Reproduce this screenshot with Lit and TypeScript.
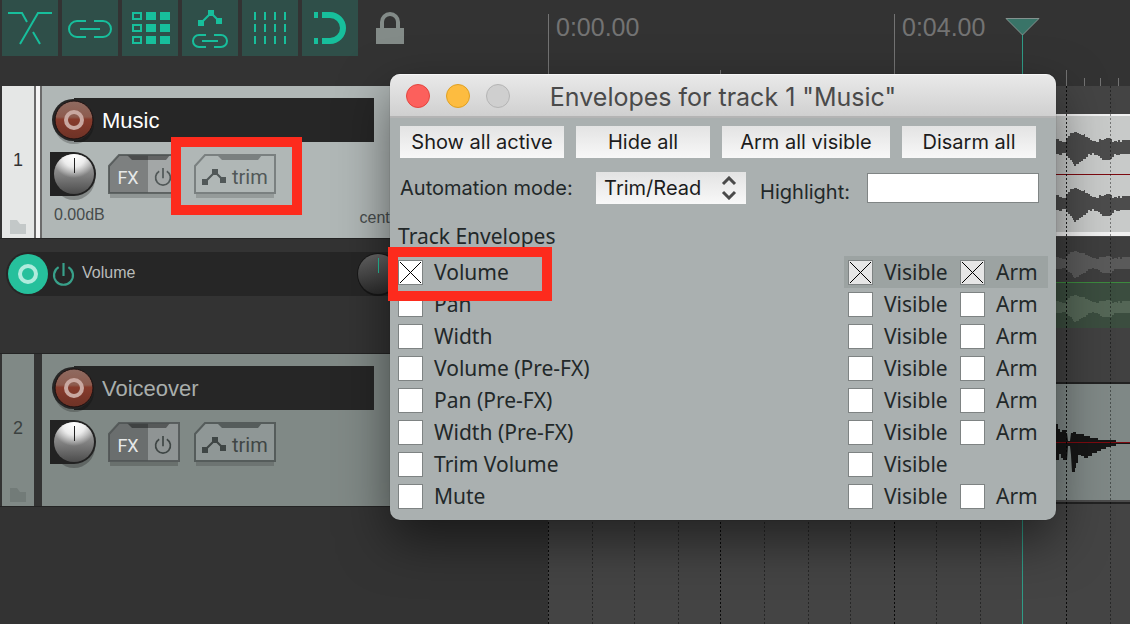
import { LitElement, html, svg, css, nothing } from "lit";
import { customElement, property } from "lit/decorators.js";

interface EnvelopeRow {
  name: string;
  enabled: boolean;
  arm: boolean;
}

const ENVELOPES: EnvelopeRow[] = [
  { name: "Volume", enabled: true, arm: true },
  { name: "Pan", enabled: false, arm: true },
  { name: "Width", enabled: false, arm: true },
  { name: "Volume (Pre-FX)", enabled: false, arm: true },
  { name: "Pan (Pre-FX)", enabled: false, arm: true },
  { name: "Width (Pre-FX)", enabled: false, arm: true },
  { name: "Trim Volume", enabled: false, arm: false },
  { name: "Mute", enabled: false, arm: true },
];

const powerIcon = (size: number) => html`<svg
  width=${size} height=${size} viewBox="0 0 16 16" fill="none" stroke="currentColor" aria-hidden="true">
  <path d="M4.6 2.9A6.6 6.6 0 1 0 11.4 2.9M8 0V9" stroke-width="1.5" />
</svg>`;

const nodesIcon = html`<svg width="24" height="18" viewBox="0 0 24 18" aria-hidden="true">
  <path d="M3 14L13 4L21 12" fill="none" stroke="currentColor" stroke-width="2" />
  <path d="M0 11h6v6H0zM10 1h6v6h-6zM18 9h6v6h-6z" fill="currentColor" />
</svg>`;

@customElement("main-toolbar")
export class MainToolbar extends LitElement {
  static styles = css`
    :host { display: flex; gap: 4px; padding-left: 2px; height: 86px; box-sizing: border-box; }
    .tool {
      width: 56px; height: 56px; padding: 0; border: 0;
      background: #2f4f49; color: #17bf9c;
    }
    .plain { background: none; color: #838b88; }
    svg { display: block; }
  `;

  render() {
    return html`
      <button class="tool" aria-label="Auto-crossfade">
        <svg width="56" height="56" fill="none" stroke="currentColor" stroke-width="2">
          <path d="M6 13H20L25 22M50 13H36L18 44M31 32L38 44" />
        </svg>
      </button>
      <button class="tool" aria-label="Item grouping">
        <svg width="56" height="56" fill="none" stroke="currentColor" stroke-width="2">
          <path d="M24 21H15a8 8 0 0 0 0 16H24M32 21H41a8 8 0 0 1 0 16H32M18 29H38" />
        </svg>
      </button>
      <button class="tool" aria-label="Ripple editing">
        <svg width="56" height="56">
          <path d="M11 13h8v6h-8zM11 25h8v6h-8zM11 37h8v6h-8z" fill="none" stroke="currentColor" stroke-width="2" />
          <path d="M24 12h10v8H24zM38 12h10v8H38zM24 24h10v8H24zM38 24h10v8H38zM24 36h10v8H24zM38 36h10v8H38z" fill="currentColor" />
        </svg>
      </button>
      <button class="tool" aria-label="Move envelope points with items">
        <svg width="56" height="56" fill="none" stroke="currentColor" stroke-width="2">
          <path d="M19 23L29 13L37 21" />
          <path d="M16 20h6v6h-6zM26 10h6v6h-6zM34 18h6v6h-6z" fill="currentColor" stroke="none" />
          <path d="M24 35H17a6 6 0 0 0 0 12H24M32 35H39a6 6 0 0 1 0 12H32M20 41H36" />
        </svg>
      </button>
      <button class="tool" aria-label="Grid lines">
        <svg width="56" height="56" fill="none" stroke="currentColor" stroke-width="2">
          <path d="M13 12V44M23 12V44M33 12V44M43 12V44" stroke-dasharray="8 4" />
        </svg>
      </button>
      <button class="tool" aria-label="Snapping">
        <svg width="56" height="56" fill="none" stroke="currentColor" stroke-width="6">
          <path d="M12 15h4M12 41h4M20 15H28a13 13 0 0 1 0 26H20" />
        </svg>
      </button>
      <button class="tool plain" aria-label="Locking">
        <svg width="56" height="56">
          <path d="M20 30V22a8 8 0 0 1 16 0V30" fill="none" stroke="currentColor" stroke-width="4" />
          <path d="M14 28h28v16H14z" fill="currentColor" />
        </svg>
      </button>
    `;
  }
}

@customElement("track-panel")
export class TrackPanel extends LitElement {
  @property() name = "";
  @property({ type: Number }) index = 1;
  @property({ type: Boolean }) selected = false;
  @property() gain = "";
  @property() pan = "";

  static styles = css`
    :host {
      display: grid; grid-template-columns: 32px 8px 1fr; height: 153px; box-sizing: border-box;
      padding-left: 2px; border-bottom: 1px solid #242424;
      font-family: "Liberation Sans", Arial, sans-serif;
      --panel: #808986; --edge: #555c5b; --ink: #3f4645; --face: #8f9796; --fx: #6a6e6e; --side: #8f9494;
    }
    :host([selected]) { --panel: #b0b7b6; --edge: #7a8080; --ink: #515858; --face: #b0b7b6; --fx: #7d8080; --side: #a3a7a7; }
    .number {
      position: relative; display: flex; align-items: center; justify-content: center;
      background: #808986; color: #3b4140; font-size: 18px; padding-bottom: 4px;
    }
    :host([selected]) .number { background: #e5e7e6; color: #333; }
    .folder { position: absolute; left: 8px; bottom: 4px; color: #727b78; }
    :host([selected]) .folder { color: #c3c8c8; }
    .bar { background: #333; }
    :host([selected]) .bar { background: #f4f4f4; border: solid #6b6b6b; border-width: 0 2px; }
    .body { background: var(--panel); padding: 12px 0 0 8px; min-width: 0; }
    .title { display: flex; align-items: center; height: 44px; }
    .strip {
      flex: none; box-sizing: border-box; width: 300px; height: 44px; margin-left: -22px; padding: 2px 0 0 28px; border: 0;
      background: #262626; color: #a9aeac; font: 22px "Liberation Sans", Arial, sans-serif;
    }
    :host([selected]) .strip { color: #fff; }
    .arm { position: relative; flex: none; width: 46px; height: 48px; padding: 0; border: 0; background: none; }
    .arm svg, .knob svg, .chip svg { display: block; }
    .controls { display: flex; height: 44px; margin-top: 10px; }
    .knob { width: 46px; height: 50px; }
    .chip {
      position: relative; display: flex; align-items: center; height: 44px; margin: 2px 0 0 12px; padding: 2px 0 0; border: 0;
      background: none; color: var(--ink); font-family: Roboto, sans-serif; font-size: 20px;
    }
    .chip > svg:first-child { position: absolute; left: 0; top: 0; }
    .chip > span, .chip > svg:not(:first-child) { position: relative; }
    .fx { width: 72px; }
    .fx span { width: 40px; color: #e6e8e8; font-size: 18px; text-align: center; }
    .fx svg:last-child { margin-left: 6px; }
    .trim { width: 82px; margin-left: 14px; padding-left: 8px; gap: 6px; }
    .readout { display: flex; justify-content: space-between; margin: 10px 0 0 4px; font-size: 16px; line-height: 20px; color: #474c4c; }
    .pan { margin-right: 144px; padding-top: 2px; }
    .gain { margin-top: -1px; }
  `;

  render() {
    return html`
      <div class="number">
        ${this.index}
        <svg class="folder" width="16" height="14" aria-hidden="true"><path d="M0 0H7L10 4H16V14H0z" fill="currentColor" /></svg>
      </div>
      <div class="bar"></div>
      <div class="body">
        <div class="title">
          <button class="arm" aria-label="Record arm">
            <svg width="46" height="48">
              <defs>
                <linearGradient id="red" x1="0" y1="0" x2="0" y2="1">
                  <stop offset="0" stop-color="#8f6b61" /><stop offset=".42" stop-color="#8d5b4e" />
                  <stop offset=".48" stop-color="#873b2c" /><stop offset="1" stop-color="#6d3226" />
                </linearGradient>
              </defs>
              <circle cx="24" cy="28" r="20" fill="#000" opacity=".22" />
              <circle cx="23" cy="24" r="21" fill="#262626" />
              <circle cx="24" cy="24" r="19" fill="url(#red)" stroke="#1c1010" />
              <circle cx="24" cy="24" r="8" fill="none" stroke="#c9a8a1" stroke-width="4" />
            </svg>
          </button>
          <input class="strip" aria-label="Track name" .value=${this.name} />
        </div>
        <div class="controls">
          <div class="knob" role="slider" aria-label="Track volume" aria-valuenow="0">
            <svg width="48" height="50">
              <defs>
                <linearGradient id="body" x1="0" y1="0" x2="0" y2="1">
                  <stop offset="0" stop-color="#b8b8b8" /><stop offset="1" stop-color="#4c4c4c" />
                </linearGradient>
                <radialGradient id="shine" cx=".5" cy=".05" r=".55">
                  <stop offset="0" stop-color="#fff" /><stop offset=".5" stop-color="#fff" stop-opacity=".8" />
                  <stop offset="1" stop-color="#fff" stop-opacity="0" />
                </radialGradient>
              </defs>
              <circle cx="24" cy="27" r="21" fill="#000" opacity=".25" />
              <path d="M0 0H24A22 22 0 0 1 24 44H0z" fill="#222" />
              <circle cx="24" cy="22" r="20" fill="url(#body)" />
              <circle cx="24" cy="22" r="20" fill="url(#shine)" />
              <path d="M24.500 6V21" stroke="#222" />
            </svg>
          </div>
          <button class="chip fx" aria-label="FX">
            <svg width="72" height="44">
              <path d="M2 40H70V44H2z" fill="#000" opacity=".18" />
              <path d="M1 39V12L11 1H71V39z" fill="var(--side)" />
              <path d="M1 39V12L11 1H40V39z" fill="var(--fx)" />
              <path d="M19 1H62L58 6H24z" fill="#000" opacity=".4" />
              <path d="M1 39V12L11 1H71V39z" fill="none" stroke="#4c5151" stroke-width="2" opacity=".8" />
            </svg>
            <span>FX</span>
            ${powerIcon(18)}
          </button>
          <button class="chip trim">
            <svg width="82" height="44">
              <path d="M2 40H80V44H2z" fill="#000" opacity=".15" />
              <path d="M1 39V12L11 1H81V39z" fill="var(--face)" stroke="var(--edge)" stroke-width="2" />
              <path d="M23 1H68L64 6H28z" fill="var(--edge)" />
            </svg>
            ${nodesIcon}
            <span>trim</span>
          </button>
        </div>
        ${this.gain
          ? html`<div class="readout"><span class="gain">${this.gain}</span><span class="pan">${this.pan}</span></div>`
          : nothing}
      </div>
    `;
  }
}

@customElement("envelope-lane")
export class EnvelopeLane extends LitElement {
  static styles = css`
    :host { display: block; height: 115px; box-sizing: border-box; padding: 13px 0 0 6px; border-bottom: 1px solid #242424; font: 16px "Liberation Sans", Arial, sans-serif; color: #b9bcbb; }
    .lane { display: flex; align-items: center; height: 44px; background: #262626; border-radius: 22px 0 0 22px; }
    .icon { padding: 0; border: 0; background: none; color: #38a18a; height: 44px; }
    .power { width: 30px; display: flex; align-items: center; justify-content: center; }
    svg { display: block; }
    .label { flex: 1; padding: 0 0 2px 4px; }
    .knob { margin-right: 148px; }
  `;

  render() {
    return html`<div class="lane">
      <button class="icon" aria-label="Arm envelope">
        <svg width="42" height="44">
          <circle cx="22" cy="22" r="20" fill="#26c09c" />
          <circle cx="22" cy="22" r="8" fill="none" stroke="#b0ebdd" stroke-width="4" />
        </svg>
      </button>
      <button class="icon power" aria-label="Bypass envelope">${powerIcon(23)}</button>
      <span class="label">Volume</span>
      <svg class="knob" width="44" height="48" role="img" aria-label="Envelope value">
        <defs><linearGradient id="g" x1="0" y1="0" x2="0" y2="1"><stop offset="0" stop-color="#666" /><stop offset="1" stop-color="#2c2c2c" /></linearGradient></defs>
        <circle cx="22" cy="26" r="20" fill="#000" opacity=".4" />
        <circle cx="22" cy="24" r="21" fill="#181818" />
        <circle cx="22" cy="24" r="20" fill="url(#g)" />
        <path d="M22.500 8V23" stroke="#26c09c" />
      </svg>
    </div>`;
  }
}

const MUSIC_WAVE =
  "M-40 -7H0V-8H3V-6H6V-5H10V-9H12V-11H14V-14H18V-15H21V-14H23V-13H25V-12H28V-13H29V-10H32V-9H34V-7H36V-6H40V-5H43V-8H45V-7H48V-8H50V-9H54V-8H56V-5H58V-6H61V-5H62V-7H64V-5H66V-7H400V7H64V8H60V7H58V10H56V12H54V13H46V11H44V9H42V8H38V6H36V8H34V7H32V10H30V12H27V14H25V15H23V17H20V19H18V17H17V15H16V13H14V11H12V9H10V6H6V8H3V7H-40z";

const VOICE_WAVE =
  "M-40 -12H-2V-19H2V-14H4V-11H6V-13H10V-10H11L12 -2H14L15 -10H17V-11H20V-9H28V-7H34V-5H42V-3H60V-1H400V1H60V3H55V4H50V6H45V8H41V10H36V13H32V15H28V13H25V12H22V20H20V25H19V29H16L15 12L14 3H12L11 17H7V15H5V11H3V17H-40z";

@customElement("arrange-view")
export class ArrangeView extends LitElement {
  static styles = css`
    :host { display: flex; flex-direction: column; position: relative; overflow: hidden; background: #444; font-family: "Liberation Sans", Arial, sans-serif; }
    svg { display: block; width: 100%; height: 100%; }
    .ruler { display: flex; height: 86px; background: #333; color: #737373; font-size: 25px; line-height: 26px; }
    .mark { box-sizing: border-box; width: 346px; flex: none; margin-top: 14px; padding-left: 7px; border-left: 1px solid #737373; }
    .gap { height: 28px; }
    .music { box-sizing: border-box; height: 122px; border: solid #f0f0f0; border-width: 2px 0 4px; background: #c8cac9; }
    .ghost { height: 46px; background: #3e3e3e; border-top: 1px solid #4a4a4a; box-sizing: border-box; }
    .green { box-sizing: border-box; height: 46px; border-top: 1px solid #3c8a3e; background: #3b4d3f; }
    .space { box-sizing: border-box; height: 56px; border-bottom: 2px solid #222; background: #414141; }
    .voice { height: 116px; background: #7f8886; }
    .end { height: 4px; box-sizing: border-box; border-top: 2px solid #4b4b4b; background: #222; }
    .grid { position: absolute; inset: 0; pointer-events: none; }
  `;

  private grid() {
    const lines = [];
    for (let i = 0; i < 60; i++) {
      const x = 2 * Math.round((i * 43.17) / 2);
      const strong = i % 4 === 0;
      lines.push(svg`<path d=${`M${x}.5 86V2000`} stroke="#000" stroke-opacity=${strong ? 0.85 : 0.42} stroke-dasharray="2 2" />`);
    }
    return lines;
  }

  private ticks() {
    return [172, 518].map((x) => svg`<path d=${`M${x}.5 70V86M${x + 18}.5 78V86M${x + 34}.5 78V86M${x + 52}.5 78V86`} stroke="#737373" />`);
  }

  render() {
    return html`
      <div class="ruler"><div class="mark">0:00.00</div><div class="mark">0:04.00</div></div>
      <div class="gap"></div>
      <div class="music">
        <svg>
          <g fill="#4c4c4c" shape-rendering="crispEdges">
            <path d=${MUSIC_WAVE} transform="translate(508 31)" />
            <path d=${MUSIC_WAVE} transform="translate(508 87)" />
          </g>
          <path d="M0 58.500H4000" stroke="#7d0a10" />
        </svg>
      </div>
      <div class="ghost">
        <svg><path d=${MUSIC_WAVE} transform="translate(508 26) scale(1 .8)" fill="#5a5a5a" shape-rendering="crispEdges" /></svg>
      </div>
      <div class="green">
        <svg><path d=${MUSIC_WAVE} transform="translate(508 24) scale(1 .8)" fill="#546656" shape-rendering="crispEdges" /></svg>
      </div>
      <div class="space"></div>
      <div class="voice">
        <svg>
          <path d=${VOICE_WAVE} transform="translate(508 59)" fill="#161616" />
          <path d="M0 58.500H4000" stroke="#7d0a10" />
        </svg>
      </div>
      <div class="end"></div>
      <svg class="grid" aria-hidden="true">
        ${this.grid()} ${this.ticks()}
        <path d="M474.500 34V2000" stroke="#2f9c87" />
        <path d="M458 18.500H491L474.500 35z" fill="#397468" stroke="#84928f" />
      </svg>
    `;
  }
}

@customElement("envelope-dialog")
export class EnvelopeDialog extends LitElement {
  static styles = css`
    :host {
      display: block; overflow: hidden; border-radius: 10px; background: #aab0b0; color: #222829;
      font: 20px/32px Inter, sans-serif;
      box-shadow: 0 20px 50px rgba(0, 0, 0, 0.5), 0 0 1px rgba(0, 0, 0, 0.5);
    }
    .titlebar {
      position: relative; display: flex; align-items: center; justify-content: center; height: 44px; box-sizing: border-box;
      background: linear-gradient(#e9e9e9, #d0d0d0); border-top: 1px solid #f6f6f6; border-bottom: 2px solid #b4b4b4;
    }
    .lights { position: absolute; left: 16px; top: 9px; display: flex; gap: 16px; }
    .light { width: 24px; height: 24px; padding: 0; border-radius: 50%; border: 1px solid #e2463f; background: #fc605c; }
    .light.min { border-color: #dfa023; background: #fdbc40; }
    .light.max { border-color: #b4b4b4; background: #cfcfcf; }
    h1 { margin: 0; padding-top: 2px; font-size: 25px; font-weight: 400; color: #4a4a4a; }
    .content { padding: 8px; }
    .actions { display: grid; grid-template-columns: 164fr 134fr 168fr 134fr; gap: 12px; padding: 0 12px 0 2px; }
    .action {
      height: 32px; padding: 0; border: 0; background: linear-gradient(#e3e3e3, #f8f8f8);
      font: 20px/32px Inter, sans-serif; color: #1c1c1c; white-space: nowrap;
    }
    .settings { display: flex; align-items: flex-start; padding: 14px 9px 0 2px; }
    .mode { position: relative; margin-left: auto; }
    .mode select {
      display: block; appearance: none; width: 150px; height: 32px; padding: 0 8px; border: 0; border-radius: 0;
      background: linear-gradient(#e3e3e3, #f8f8f8); font: 20px/32px Inter, sans-serif; color: #1c1c1c;
    }
    .mode svg { position: absolute; right: 9px; top: 4px; pointer-events: none; }
    .highlight { margin: 0 17px 0 14px; padding-top: 4px; }
    .filter { box-sizing: border-box; width: 172px; height: 30px; margin-top: 1px; border: 1px solid #808585; border-radius: 0; background: #fff; padding: 0 6px; font: 20px Inter, sans-serif; }
    .lucida { font-family: "Noto Sans", sans-serif; font-size: 21px; }
    h2 { margin: 12px 0 4px; font-size: 21px; font-weight: 400; }
    .row { display: flex; justify-content: space-between; height: 32px; }
    .state { display: flex; width: 200px; padding-left: 4px; }
    .on { background: #9ca3a2; }
    label { display: flex; align-items: center; gap: 11px; width: 112px; white-space: nowrap; }
    .main { width: auto; }
    .arm { width: 88px; }
    input[type="checkbox"] {
      appearance: none; box-sizing: border-box; flex: none; width: 25px; height: 25px; margin: 0;
      border: 1px solid #7e8383; background: #fff;
    }
    input[type="checkbox"]:checked {
      background: #fff url("data:image/svg+xml,%3Csvg xmlns='http://www.w3.org/2000/svg' width='23' height='23'%3E%3Cpath d='M1 1L22 22M22 1L1 22' stroke='%23000'/%3E%3C/svg%3E");
    }
    .on input[type="checkbox"]:checked { background-color: #e6e6e6; }
  `;

  render() {
    return html`
      <header class="titlebar">
        <div class="lights">
          <button class="light" aria-label="Close"></button>
          <button class="light min" aria-label="Minimize"></button>
          <button class="light max" aria-label="Zoom" disabled></button>
        </div>
        <h1>Envelopes for track 1 "Music"</h1>
      </header>
      <div class="content">
        <div class="actions">
          <button class="action">Show all active</button>
          <button class="action">Hide all</button>
          <button class="action">Arm all visible</button>
          <button class="action">Disarm all</button>
        </div>
        <div class="settings">
          <label class="main" for="mode">Automation mode:</label>
          <div class="mode">
            <select id="mode"><option>Trim/Read</option></select>
            <svg width="16" height="24" fill="none" stroke="#4a4a4a" stroke-width="3" aria-hidden="true">
              <path d="M2 8L8 2L14 8M2 16L8 22L14 16" />
            </svg>
          </div>
          <label class="main highlight" for="filter">Highlight:</label>
          <input id="filter" class="filter" type="text" />
        </div>
        <div class="lucida">
          <h2>Track Envelopes</h2>
          ${ENVELOPES.map(
            (e) => html`<div class="row">
              <label class="main"><input type="checkbox" .checked=${e.enabled} />${e.name}</label>
              <div class="state ${e.enabled ? "on" : ""}">
                <label><input type="checkbox" .checked=${e.enabled} />Visible</label>
                ${e.arm ? html`<label class="arm"><input type="checkbox" .checked=${e.enabled} />Arm</label>` : nothing}
              </div>
            </div>`
          )}
        </div>
      </div>
    `;
  }
}

@customElement("app-root")
export class AppRoot extends LitElement {
  static styles = css`
    :host {
      display: grid; grid-template-columns: 548px 1fr; position: relative; overflow: hidden;
      min-height: 100vh; background: #333;
    }
    .dialog { position: absolute; left: 390px; top: 74px; width: 666px; }
    .callout { position: absolute; box-sizing: border-box; border: 10px solid #fd2b1d; pointer-events: none; }
    .callout-trim { left: 171px; top: 137px; width: 131px; height: 78px; }
    .callout-volume { left: 388px; top: 247px; width: 164px; height: 54px; }
  `;

  render() {
    return html`
      <section>
        <main-toolbar></main-toolbar>
        <track-panel name="Music" index="1" selected gain="0.00dB" pan="center"></track-panel>
        <envelope-lane></envelope-lane>
        <track-panel name="Voiceover" index="2"></track-panel>
      </section>
      <arrange-view></arrange-view>
      <envelope-dialog class="dialog"></envelope-dialog>
      <div class="callout callout-trim"></div>
      <div class="callout callout-volume"></div>
    `;
  }
}
